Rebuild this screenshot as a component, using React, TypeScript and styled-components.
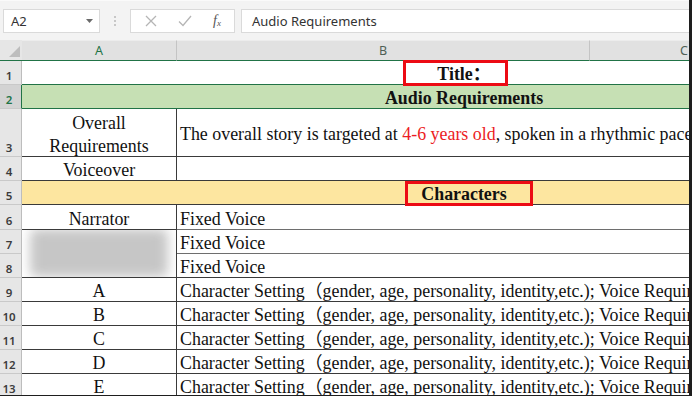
import * as React from 'react';
import styled, { createGlobalStyle } from 'styled-components';

const GlobalStyle = createGlobalStyle`
    html, body {
        margin: 0;
        padding: 0;
        background: #ffffff;
    }
`;

const SERIF = '"Liberation Serif", "Noto Sans CJK SC", serif';
const UI = '"Noto Sans", "Open Sans", sans-serif';
const GREEN = '#217346';
const LINE = '#3a3a3a';

const Frame = styled.div`
    position: relative;
    width: 689px;
    height: 395px;
    overflow: hidden;
    background: #ffffff;
    border-right: 3px solid #1e1e1e;
    border-bottom: 1px solid #1e1e1e;
`;

const FormulaBar = styled.div`
    display: flex;
    align-items: center;
    height: 40px;
    padding: 0 0 0 3px;
    box-sizing: border-box;
    background: #f3f3f3;
    border-top: 1px solid #fafafa;
    font-family: ${UI};
`;

const NameBox = styled.div`
    display: flex;
    align-items: center;
    justify-content: space-between;
    width: 97px;
    height: 24px;
    box-sizing: border-box;
    padding: 0 6px 0 7px;
    background: #ffffff;
    border: 1px solid #dadada;
    font-size: 13px;
    color: #333;
`;

const Dots = styled.div`
    display: flex;
    flex-direction: column;
    gap: 2px;
    margin: 0 14px 0 14px;

    span {
        width: 2px;
        height: 2px;
        border-radius: 1px;
        background: #b9b9b9;
    }
`;

const FuncBox = styled.div`
    display: flex;
    align-items: center;
    width: 105px;
    height: 24px;
    box-sizing: border-box;
    background: #ffffff;
    border: 1px solid #dadada;
    padding-left: 14px;
`;

const FuncIcon = styled.div`
    width: 33px;
    display: flex;
    align-items: center;
`;

const Fx = styled.span`
    font-family: ${SERIF};
    font-style: italic;
    font-size: 14px;
    color: #555;
    padding-left: 2px;

    sub {
        font-size: 9px;
        vertical-align: -1px;
    }
`;

const FormulaInput = styled.div`
    flex: 1;
    height: 24px;
    margin-left: 6px;
    box-sizing: border-box;
    display: flex;
    align-items: center;
    padding-left: 10px;
    background: #ffffff;
    border: 1px solid #dadada;
    border-right: none;
    font-size: 13px;
    color: #333;
`;

const Sheet = styled.div`
    display: grid;
    grid-template-columns: 22px 155px 413px 316px;
    grid-template-rows: 21px 24px 24px 48px 24px 24px 25px 24px 24px 24px 24px 24px 24px 24px;
    width: 906px;
`;

const Corner = styled.div`
    background: #e6e6e6;
    border-bottom: 1px solid ${GREEN};
    box-sizing: border-box;
    display: flex;
    align-items: flex-end;
    justify-content: flex-end;
    padding: 0 2px 3px 0;
`;

const ColHead = styled.div<{ $active?: boolean; $last?: boolean }>`
    background: #e1e1e1;
    border-right: ${(p) => (p.$last ? 'none' : '1px solid #c4c4c4')};
    border-bottom: 1px solid ${GREEN};
    border-top: 1px solid #ececec;
    box-sizing: border-box;
    display: flex;
    align-items: center;
    justify-content: ${(p) => (p.$last ? 'flex-start' : 'center')};
    padding-left: ${(p) => (p.$last ? '90px' : '0')};
    font-family: ${UI};
    font-size: 12.5px;
    color: ${(p) => (p.$active ? GREEN : '#4f5f55')};
`;

const RowHead = styled.div<{ $active?: boolean }>`
    background: ${(p) => (p.$active ? '#d3d3d3' : '#e6e6e6')};
    border-bottom: 1px solid #c9c9c9;
    border-right: 1px solid ${(p) => (p.$active ? GREEN : '#bdbdbd')};
    box-sizing: border-box;
    display: flex;
    align-items: flex-end;
    justify-content: center;
    padding: 0 3px 1px 0;
    font-family: ${UI};
    font-size: 11.5px;
    font-weight: 600;
    color: ${(p) => (p.$active ? GREEN : '#3c3c3c')};
`;

const Cell = styled.div<{
    $span?: string;
    $rows?: string;
    $bg?: string;
    $center?: boolean;
    $bold?: boolean;
    $bottom?: string;
    $right?: boolean;
}>`
    grid-column: ${(p) => p.$span || 'auto'};
    grid-row: ${(p) => p.$rows || 'auto'};
    background: ${(p) => p.$bg || '#ffffff'};
    border-bottom: 1px solid ${(p) => p.$bottom || LINE};
    border-right: ${(p) => (p.$right ? `1px solid ${LINE}` : 'none')};
    box-sizing: border-box;
    display: flex;
    align-items: center;
    justify-content: ${(p) => (p.$center ? 'center' : 'flex-start')};
    text-align: ${(p) => (p.$center ? 'center' : 'left')};
    padding: 4px 0 0 ${(p) => (p.$center ? '0' : '3px')};
    overflow: hidden;
    white-space: nowrap;
    font-family: ${SERIF};
    font-size: 17.9px;
    font-weight: ${(p) => (p.$bold ? 700 : 400)};
    line-height: 23px;
    color: #111;
`;

const Wrap = styled.span`
    white-space: normal;
    width: 130px;
`;

const Red = styled.span`
    color: #ec1c24;
`;

const Blur = styled.div`
    width: 138px;
    height: 48px;
    margin-top: -5px;
    border-radius: 6px;
    background: #c6c6c6;
    filter: blur(6px);
`;

const Highlight = styled.div<{ $x: number; $y: number; $w: number; $h: number }>`
    position: absolute;
    left: ${(p) => p.$x}px;
    top: ${(p) => p.$y}px;
    width: ${(p) => p.$w}px;
    height: ${(p) => p.$h}px;
    box-sizing: border-box;
    border: 3px solid #ec0b14;
    pointer-events: none;
`;

const CHAR_TEXT =
    'Character Setting（gender, age, personality, identity,etc.); Voice Requirements（tone, speed, emotion）';

const letters = ['A', 'B', 'C', 'D', 'E'];

function NameArrow(): JSX.Element {
    return (
        <svg width="7" height="4" viewBox="0 0 7 4">
            <path d="M0 0 L7 0 L3.5 4 Z" fill="#6a6a6a" />
        </svg>
    );
}

export default function App(): JSX.Element {
    return (
        <Frame>
            <GlobalStyle />
            <FormulaBar>
                <NameBox>
                    <span>A2</span>
                    <NameArrow />
                </NameBox>
                <Dots>
                    <span />
                    <span />
                    <span />
                </Dots>
                <FuncBox>
                    <FuncIcon>
                        <svg width="12" height="12" viewBox="0 0 12 12">
                            <path d="M1 1 L11 11 M11 1 L1 11" stroke="#b5b5b5" strokeWidth="1.3" />
                        </svg>
                    </FuncIcon>
                    <FuncIcon>
                        <svg width="14" height="12" viewBox="0 0 14 12">
                            <path d="M1 6.5 L5 10.5 L13 1" stroke="#b5b5b5" strokeWidth="1.3" fill="none" />
                        </svg>
                    </FuncIcon>
                    <Fx>
                        f<sub>x</sub>
                    </Fx>
                </FuncBox>
                <FormulaInput>Audio Requirements</FormulaInput>
            </FormulaBar>

            <Sheet>
                <Corner>
                    <svg width="11" height="11" viewBox="0 0 11 11">
                        <path d="M11 0 L11 11 L0 11 Z" fill="#bdbdbd" />
                    </svg>
                </Corner>
                <ColHead $active>A</ColHead>
                <ColHead>B</ColHead>
                <ColHead $last>C</ColHead>

                <RowHead>1</RowHead>
                <Cell $span="2 / 5" $center $bold $bottom={GREEN}>
                    Title：
                </Cell>

                <RowHead $active>2</RowHead>
                <Cell $span="2 / 5" $center $bold $bg="#c6e0b4" $bottom={GREEN}>
                    Audio Requirements
                </Cell>

                <RowHead>3</RowHead>
                <Cell $center $right>
                    <Wrap>Overall Requirements</Wrap>
                </Cell>
                <Cell $span="3 / 5">
                    The overall story is targeted at&nbsp;<Red>4-6 years old</Red>, spoken in a rhythmic pace with a warm tone
                </Cell>

                <RowHead>4</RowHead>
                <Cell $center $right>
                    Voiceover
                </Cell>
                <Cell $span="3 / 5" />

                <RowHead>5</RowHead>
                <Cell $span="2 / 5" $center $bold $bg="#fde6a0">
                    Characters
                </Cell>

                <RowHead>6</RowHead>
                <Cell $center $right>
                    Narrator
                </Cell>
                <Cell $span="3 / 5" $bottom="#6e6e6e">
                    Fixed Voice
                </Cell>

                <RowHead>7</RowHead>
                <Cell $rows="span 2" $center $right>
                    <Blur />
                </Cell>
                <Cell $span="3 / 5" $bottom="#6e6e6e">
                    Fixed Voice
                </Cell>

                <RowHead>8</RowHead>
                <Cell $span="3 / 5">Fixed Voice</Cell>

                {letters.map((letter, index) => (
                    <React.Fragment key={letter}>
                        <RowHead>{index + 9}</RowHead>
                        <Cell $center $right>
                            {letter}
                        </Cell>
                        <Cell $span="3 / 5">{CHAR_TEXT}</Cell>
                    </React.Fragment>
                ))}
            </Sheet>

            <Highlight $x={403} $y={60} $w={105} $h={26} />
            <Highlight $x={405} $y={181} $w={128} $h={25} />
        </Frame>
    );
}
